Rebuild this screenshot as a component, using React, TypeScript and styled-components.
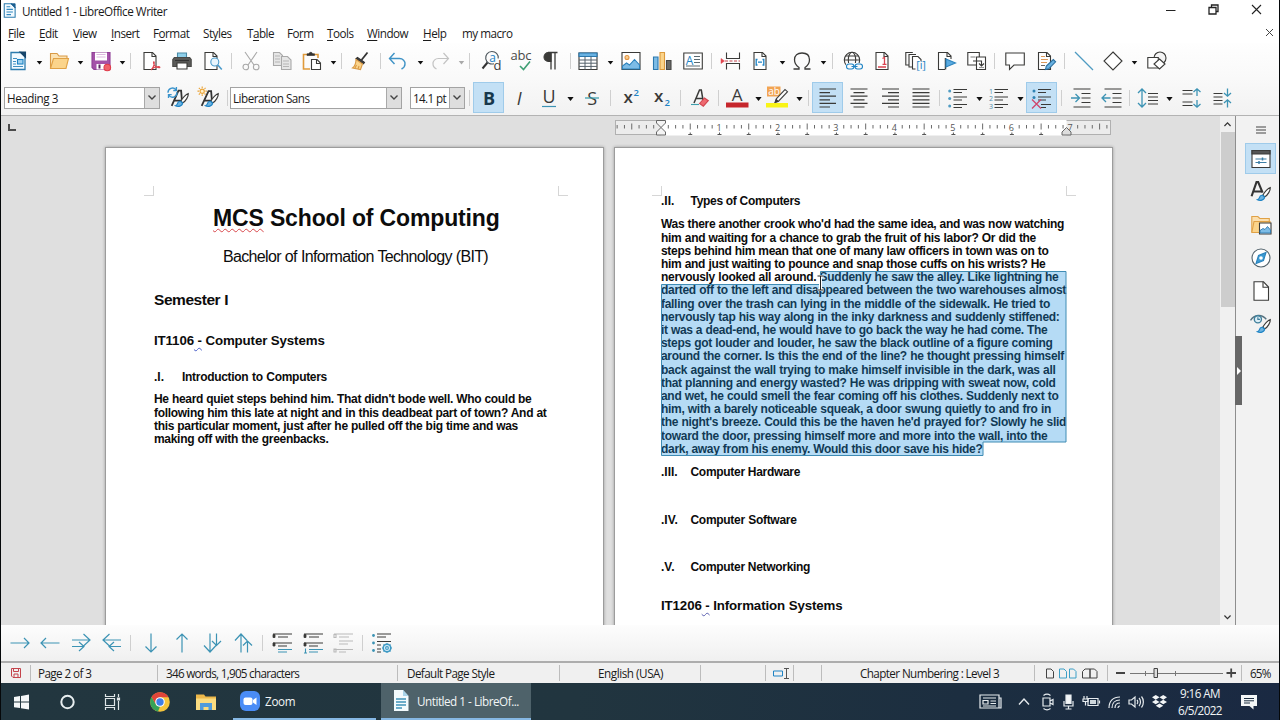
import React from 'react';
import styled, { createGlobalStyle, css } from 'styled-components';

const INK = '#3a3a38';
const BLUE = '#1e83c4';
const TEAL = '#3c93b4';
const GREY = '#b9b9b9';

const Global = createGlobalStyle`
  * { box-sizing: border-box; }
  body { margin: 0; background: #fff; overflow: hidden; }
`;

/* ---------- shell ---------- */
const Screen = styled.div`
  position: relative;
  width: 1280px;
  height: 720px;
  display: flex;
  flex-direction: column;
  overflow: hidden;
  background: #fff;
  color: #1a1a1a;
  font: 11.7px/16px 'Open Sans', 'Noto Sans', sans-serif;
  &::after {
    content: '';
    position: absolute;
    inset: 0;
    border: solid #05080a;
    border-width: 0 1px;
    pointer-events: none;
  }
`;
const Label = styled.span<{ $ls?: number; $ml?: number }>`
  white-space: nowrap;
  flex: none;
  letter-spacing: ${p => p.$ls ?? -0.6}px;
  margin-left: ${p => p.$ml ?? 0}px;
`;
const TitleBar = styled.header`
  height: 22px;
  flex: none;
  display: flex;
  align-items: center;
  padding: 0 18px 1px 2px;
  gap: 5px;
`;
const WindowButtons = styled.div`
  display: flex;
  margin-left: auto;
  align-items: center;
  gap: 32px;
  height: 18px;
  padding-bottom: 2px;
`;
const MenuBar = styled.nav`
  height: 21px;
  flex: none;
  display: flex;
  align-items: center;
  padding: 0 6px 0 8px;
`;
const MenuItem = styled.span<{ $w: number }>`
  width: ${p => p.$w}px;
  white-space: nowrap;
  letter-spacing: -0.5px;
  u { text-underline-offset: 1.5px; text-decoration-thickness: 1px; }
`;
const MenuClose = styled.div`
  display: flex;
  margin-left: auto;
`;
const Toolbar = styled.div<{ $h: number; $pl: number; $pt?: number; $bg: string; $line?: string }>`
  height: ${p => p.$h}px;
  flex: none;
  display: flex;
  align-items: center;
  padding-left: ${p => p.$pl}px;
  padding-top: ${p => p.$pt ?? 0}px;
  background: ${p => p.$bg};
  ${p => p.$line && css`border-bottom: ${p.$line};`}
`;
const Tool = styled.span<{ $ml: number; $w?: number; $on?: boolean }>`
  flex: none;
  display: flex;
  align-items: center;
  justify-content: center;
  margin-left: ${p => p.$ml}px;
  width: ${p => p.$w ?? 20}px;
  height: ${p => (p.$on ? 31 : 22)}px;
  ${p => p.$on && css`
    background: #c3e0f5;
    border: 1px solid #9fcbea;
  `}
`;
const Divider = styled.i<{ $ml: number }>`
  flex: none;
  width: 1px;
  height: 16px;
  margin-left: ${p => p.$ml}px;
  background: #cfcfcf;
`;
const Caret = styled.i<{ $ml: number; $off?: boolean }>`
  flex: none;
  width: 7px;
  height: 4px;
  margin: 3px 0 0 ${p => p.$ml}px;
  background: ${p => (p.$off ? '#a9a9a9' : '#111')};
  clip-path: polygon(5% 0, 95% 0, 50% 100%);
`;
const Combo = styled.div<{ $w: number; $ml: number }>`
  flex: none;
  display: flex;
  align-items: center;
  width: ${p => p.$w}px;
  height: 22px;
  margin-left: ${p => p.$ml}px;
  padding-left: 2px;
  border: 1px solid #a3a3a3;
  background: #fff;
`;
const ComboButton = styled.span`
  flex: none;
  display: flex;
  align-items: center;
  justify-content: center;
  margin-left: auto;
  width: 15px;
  height: 20px;
  background: #dedede;
  border-left: 1px solid #a9a9a9;
`;

/* ---------- workspace ---------- */
const Workspace = styled.div`
  height: 509px;
  flex: none;
  display: flex;
  overflow: hidden;
`;
const Canvas = styled.main`
  width: 1220px;
  flex: none;
  display: flex;
  flex-direction: column;
  background: #dfdfdf;
`;
const RulerRow = styled.div`
  height: 31px;
  flex: none;
  display: flex;
  align-items: flex-start;
  padding: 4px 0 0 8px;
`;
const TabSelector = styled.div`
  width: 607px;
  flex: none;
  padding-top: 4px;
  &::before {
    content: '';
    display: block;
    width: 6px;
    height: 5px;
    border: solid #4a4a4a;
    border-width: 0 0 2px 2px;
  }
`;
const Pages = styled.div`
  display: flex;
  gap: 10px;
  padding-left: 105px;
`;
const Page = styled.article<{ $pl: number }>`
  position: relative;
  width: 499px;
  height: 520px;
  padding-left: ${p => p.$pl}px;
  background: #fff;
  border: 1px solid #9c9c9c;
  box-shadow: 0 0 3px rgba(0, 0, 0, 0.3);
  color: #0c0c0c;
  font-family: 'Liberation Sans', Arial, sans-serif;
`;
const Corner = styled.i<{ $x: number; $side: 'l' | 'r' }>`
  position: absolute;
  top: 38px;
  left: ${p => p.$x}px;
  width: 10px;
  height: 10px;
  border: 0 solid #d6d6d6;
  border-bottom-width: 1px;
  ${p => (p.$side === 'l' ? css`border-right-width: 1px;` : css`border-left-width: 1px;`)}
`;
const Line = styled.div<{ $w: number; $lh: number; $mt?: number; $size: number; $ls?: number; $ml?: number; $plain?: boolean }>`
  margin: ${p => p.$mt ?? 0}px 0 0 ${p => p.$ml ?? 0}px;
  width: ${p => p.$w}px;
  font-size: ${p => p.$size}px;
  font-weight: ${p => (p.$plain ? 400 : 700)};
  line-height: ${p => p.$lh}px;
  letter-spacing: ${p => p.$ls ?? 0}px;
  white-space: nowrap;
  text-align-last: justify;
`;
const Body = styled.div<{ $mt: number }>`
  margin-top: ${p => p.$mt}px;
`;
const Numbered = styled.div<{ $mt: number; $tab: number; $w: number }>`
  display: flex;
  margin-top: ${p => p.$mt}px;
  font-size: 12px;
  font-weight: 700;
  line-height: 14px;
  letter-spacing: -0.3px;
  white-space: nowrap;
  b { width: ${p => p.$tab}px; letter-spacing: 0; }
  span { width: ${p => p.$w}px; text-align-last: justify; }
`;
const Spell = styled.span<{ $c: string }>`
  text-decoration: underline wavy ${p => p.$c} 0.8px;
  text-decoration-skip-ink: none;
  text-underline-offset: 2px;
`;
const Overlay = styled.svg<{ $x: number; $y: number }>`
  position: absolute;
  left: ${p => p.$x}px;
  top: ${p => p.$y}px;
`;
const ScrollTrack = styled.div`
  width: 15px;
  flex: none;
  display: flex;
  flex-direction: column;
  align-items: center;
  justify-content: space-between;
  background: #f0f0f0;
`;
const ScrollTop = styled.div`
  width: 100%;
  display: flex;
  flex-direction: column;
  align-items: center;
`;
const Thumb = styled.div`
  width: 14px;
  height: 175px;
  background: #cdcdcd;
`;
const ArrowBox = styled.div`
  height: 16px;
  display: flex;
  align-items: center;
`;
const Sidebar = styled.aside`
  position: relative;
  flex: 1;
  display: flex;
  flex-direction: column;
  align-items: center;
  padding: 3px 4px 0 9px;
  background: #f2f2f2;
  border-left: 1px solid #8e8e8e;
  gap: 2px;
`;
const SideItem = styled.div<{ $on?: boolean; $h?: number }>`
  flex: none;
  display: flex;
  align-items: center;
  justify-content: center;
  width: 31px;
  height: ${p => p.$h ?? 31}px;
  ${p => p.$on && css`
    background: #c3e0f5;
    border: 1px solid #9fcbea;
  `}
`;
const Splitter = styled.div`
  position: absolute;
  left: -1px;
  top: 220px;
  width: 7px;
  height: 69px;
  display: flex;
  align-items: center;
  justify-content: center;
  background: #666;
  &::after {
    content: '';
    border: solid transparent;
    border-width: 4px 0 4px 4px;
    border-left-color: #fff;
  }
`;

/* ---------- status bar and taskbar ---------- */
const StatusBar = styled.footer`
  height: 20px;
  flex: none;
  display: flex;
  align-items: center;
  background: #f0f0f0;
  padding-left: 11px;
`;
const StatusCell = styled.span<{ $w: number; $pl?: number; $ls?: number }>`
  flex: none;
  width: ${p => p.$w}px;
  padding-left: ${p => p.$pl ?? 0}px;
  letter-spacing: ${p => p.$ls ?? -0.6}px;
  height: 16px;
  white-space: nowrap;
  border-right: 1px solid #bcbcbc;
  display: flex;
  align-items: center;
`;
const Taskbar = styled.div`
  height: 37px;
  flex: none;
  display: flex;
  align-items: center;
  padding-left: 12px;
  background: linear-gradient(90deg, #22363f 0%, #21353f 45%, #1c2e40 75%, #1a2942 100%);
  color: #f2f5f6;
`;
const Task = styled.div<{ $w: number; $ml: number; $pl: number; $on?: boolean }>`
  flex: none;
  display: flex;
  align-items: center;
  margin-left: ${p => p.$ml}px;
  width: ${p => p.$w}px;
  height: 37px;
  padding-left: ${p => p.$pl}px;
  gap: 5px;
  border-bottom: 2px solid #86b8e4;
  background: ${p => (p.$on ? '#4e626a' : 'transparent')};
`;
const Clock = styled.div`
  width: 46px;
  flex: none;
  margin-left: 10px;
  text-align: center;
  line-height: 17px;
  letter-spacing: -0.6px;
`;

/* ---------- icons ---------- */
const sheet = 'M3 1.5h8.5L15 5v13.5H3z';
const fold = 'M11 1.5V5.5h4';
const L = (rows: [number, number, number][], c = INK, w = 1.2) => (
  <path d={rows.map(([x1, x2, y]) => `M${x1} ${y}H${x2}`).join('')} stroke={c} strokeWidth={w} />
);
const T = (x: number, y: number, s: string, size: number, fill = INK, weight = 400, style = 'normal') => (
  <text x={x} y={y} fontSize={size} fill={fill} stroke="none" fontWeight={weight} fontStyle={style} textAnchor="middle" letterSpacing="-0.2">{s}</text>
);
const brush = (
  <g>
    <path d="M19.3 6.2c-2 .6-5.6 4.2-7 7.2l1.8 1.7c2.8-1.7 5.5-6.1 5.2-8.9z" fill="#fff" stroke={INK} />
    <path d="M12 13.6c-1.7-.3-2.7.8-3 2.2-.2 1.2-1 1.7-2 2 2.5 1.3 6.8.6 6.9-2.6z" fill="#6db3e0" stroke={BLUE} />
  </g>
);
const listRows: [number, number, number][] = [[5.5, 19, 1.5], [5.5, 14, 4.5], [5.5, 19, 9], [5.5, 14, 12], [5.5, 19, 16.5], [5.5, 14, 19.5]];
const indentRows: [number, number, number][] = [[2.5, 19.5, 1], [10.5, 19.5, 5.5], [10.5, 19.5, 10], [10.5, 19.5, 14.5], [2.5, 19.5, 19]];
const ICONS: Record<string, React.ReactNode> = {
  newdoc: <><path d="M3 1.5h10l4 4v13H3z" fill="#f2faff" stroke="#2c7cae" strokeWidth="1.3" /><path d="M12 1h5.5v5.5z" fill="#17466b" stroke="#17466b" />{L([[5, 9, 7.5], [5, 8, 10.5], [5, 15, 15.5], [5, 8, 13]], '#3f8fc0', 1)}<rect x="9.5" y="8.5" width="5.5" height="4.5" fill="#9fd0ee" stroke={BLUE} /></>,
  appdoc: <><path d="M3 1h9.500l5 5v13H3z" fill="#f2faff" stroke="#2c7cae" strokeWidth="1.4" /><path d="M12 1h5.500v5.500z" fill="#1b5f90" stroke="#1b5f90" />{L([[6, 11, 5], [6, 14.5, 8.5], [6, 14.5, 12], [6, 12, 15.5]], '#2f86bd', 1.5)}</>,
  folder: <><path d="M1.5 17V2.5h6.5l2 2.5h8v3" fill="#fbe3b5" stroke="#d99a45" /><path d="M1.5 17.5L4.5 7.5h15l-2.5 10z" fill="#fbd48b" stroke="#e0a145" /></>,
  save: <><path d="M1 1.5h18v17H3l-2-2z" fill="#a452a8" stroke="#8f3f96" /><path d="M4 1.500h12V9.500H4z" fill="#fff" stroke="none" /><path d="M5.500 13h9v5.500h-9z" fill="#fff" stroke="none" /><path d="M8.500 13.500v4" stroke="#5a2460" strokeWidth="2" /><path d="M5.500 3.500h9M5.500 6h9" stroke="#ddb9df" /><circle cx="16.300" cy="16.500" r="3.300" fill="#f0616b" stroke="#e03c4a" /></>,
  pdf: <><path d={sheet} fill="#fff" /><path d={fold} /><path d="M10 19c1.5-1 3.5-5 3.3-7.5-.2-1.200-1-.8-.8.5.3 2 2.500 4.800 5.500 4.800 1.500 0 1-1.200-.5-1.200-2.500 0-5 .9-7 2.400" stroke="#dd4650" strokeWidth="1.100" /></>,
  print: <><path d="M5.5 7V2h9v5" fill="#8fd0ea" stroke="#4a8aa6" /><path d="M.8 8.5l1.5-2h15.400l1.500 2v7H.8z" fill="#5a5a58" stroke="#484846" /><path d="M5 12h10v6H5z" fill="#fff" /><path d="M3 9.5h14" stroke="#333" /></>,
  preview: <><path d={sheet} transform="translate(-1 0)" fill="#fff" /><path d={fold} transform="translate(-1 0)" /><circle cx="11.800" cy="11" r="4" fill="#e9f5fd" stroke="#4a9acb" /><path d="M14.800 14l4 4.500" stroke="#4a9acb" strokeWidth="1.600" /></>,
  cut: <g stroke="#a9a9a9"><path d="M4 1l9 13M16 1L7 14" /><circle cx="4.800" cy="16" r="2.800" /><circle cx="15.200" cy="16" r="2.800" /></g>,
  copy: <g stroke="#a9a9a9"><path d="M1.5 1.5h6l3 3v10h-9z" fill="#e6e6e6" /><path d="M9.5 5.500h6l3.500 3.500v9.500H9.500z" fill="#e6e6e6" />{L([[3, 8, 5], [3, 8, 8], [3, 8, 11], [11, 17, 10], [11, 17, 13], [11, 17, 15.5]], '#b5b5b5', 1)}</g>,
  paste: <><path d="M8 18H1.5V3.500H16V7" stroke="#e09a3a" strokeWidth="1.600" /><path d="M5 4.500V2.800h2c0-2 3.500-2 3.500 0h2v1.700z" fill="#333" stroke="#333" strokeWidth=".6" /><path d="M9.500 8.500h5.500l3.500 3.500v6.500h-9z" fill="#fff" /><path d="M14.500 8.500v4h4" /></>,
  broom: <><path d="M16.500 1.500L10.500 9" stroke="#333" strokeWidth="1.800" /><path d="M6.500 6.500l7 4.800-1 1.500-7.500-5z" fill="#444" stroke="#333" /><path d="M5 8.500l6.500 4.500-2 5.500-8-1.500c2-1.500 3.500-5 3.500-8.500z" fill="#fbd48b" stroke="#d99a45" /><path d="M4 17l1.500-3M7 18l1-3" stroke="#d99a45" /></>,
  undo: <path d="M1.500 7.500h10a5.500 5 0 015.500 5.500c0 2.500-1.500 4-3.500 5M6.500 2l-5 5.500L6.500 13" stroke="#3f93c6" strokeWidth="1.400" />,
  redo: <path d="M18.500 7.500h-10A5.500 5 0 003 13c0 2.500 1.500 4 3.500 5M13.500 2l5 5.500-5 5.500" stroke="#c3c3c3" strokeWidth="1.200" />,
  find: <><path d="M6.500 11.500L1.500 17.500" stroke="#333" strokeWidth="2" /><path d="M13 12.700A6.300 6.300 0 1117.200 7.500" stroke="#4c565c" />{T(11.500, 10.500, 'a', 12, BLUE)}{T(16.500, 19, 'd', 13, '#3a3a3a')}</>,
  abc: <>{T(10, 8.500, 'abc', 13, '#4a4a48')}<path d="M9 15l3.500 3.500L19 10.500" stroke="#3f9f74" strokeWidth="1.600" /></>,
  pilcrow: <><path d="M10 1.500H7.500a4.500 4.500 0 000 9H10z" fill={INK} /><path d="M10 1.500v17M14 1.500v17M7 1.500h9.500" strokeWidth="1.300" /></>,
  table: <><path d="M1 2h18v16.500H1z" fill="#fff" /><path d="M1 2h18v3.500H1z" fill="#69b2e2" stroke="#2a78ae" /><path d="M1 9h18M1 12.200h18M1 15.400h18M7 5.500v13M13 5.500v13" stroke="#55616a" strokeWidth="1" /></>,
  image: <><path d="M1 1.500h18v17H1z" fill="#fff" /><circle cx="6" cy="6.500" r="2" fill="#f9ce92" stroke="#e29542" /><path d="M1.500 18v-3l4-3 3 2 5-5.500 5 5.500v4z" fill="#7dbce6" stroke="#2c83bd" /></>,
  chart: <><path d="M1.500 6h4.500v12.500H1.500z" fill="#7dbce6" stroke="#2c78ae" /><path d="M8 1.500h4.500v17H8z" fill="#fbd48b" stroke="#dc9a3c" /><path d="M14.500 9.500H19v9h-4.500z" fill="#6a6a68" stroke="#484846" /></>,
  textbox: <><path d="M.8 2h18.500v16H.8z" fill="#fff" />{T(6.500, 13.500, 'A', 12, BLUE)}{L([[11, 17, 5.5], [11, 17, 8.5], [11, 17, 11.5], [3, 17, 15]], '#5a6a72', 1)}</>,
  pagebreak: <><path d="M5.500 1.500v6h13v-6M5.500 18.500v-6h13v6" /><path d="M4 10h15" stroke="#c3434c" strokeDasharray="3 1.500" /><path d="M0 7.500l3.500 2.500L0 12.500z" fill="#e0444f" stroke="#e0444f" strokeWidth=".5" /></>,
  field: <><path d={sheet} fill="#fff" /><path d={fold} /><path d="M6.500 8.500H5.200v5.500h1.300M11.500 8.500h1.300V14h-1.300M7 11.200h4" stroke={BLUE} strokeWidth="1.300" /></>,
  omega: <path d="M1.500 18h5.500v-1.500C4 14.500 2.500 12 2.500 8.800 2.500 4.500 5.500 2 10 2s7.500 2.500 7.500 6.800c0 3.200-1.500 5.700-4.500 7.700V18h5.500" strokeWidth="1.300" />,
  link: <><circle cx="9" cy="9" r="7.700" /><ellipse cx="9" cy="9" rx="3.700" ry="7.700" /><path d="M1.500 9h15M2.500 5h13" /><path d="M3 12h17v8H3z" fill="#fafafa" stroke="none" /><rect x="3.500" y="13" width="7.500" height="5" rx="2.500" stroke={BLUE} /><rect x="12" y="13" width="7.500" height="5" rx="2.500" stroke={BLUE} /><path d="M8.500 15.500h6" stroke={BLUE} /></>,
  footnote: <><path d={sheet} fill="#fff" /><path d={fold} /><path d="M9.500 7.500l2-1.200v7M9.500 13.300h4M5 16h8" stroke="#d9434f" strokeWidth="1.300" /></>,
  index: <><path d="M3.500 14H.8V1.500h7M7 16H4V3.500h7" /><path d="M7.500 5.500h5.500l3 3V18H7.500z" fill="#fff" /><path d="M10.500 10H21v10H10.500z" fill="#fafafa" stroke="none" />{T(16, 18, '[i]', 11, BLUE)}</>,
  bookmark: <><path d="M8 18.500H1.500v-17h9L14 5v3" fill="#fff" /><path d="M10 1.500V5.500h4" /><path d="M8.500 7v11.500" strokeWidth="1.500" /><path d="M9 8l9.500 4L9 16z" fill="#5aaae0" stroke="#2c83bd" /></>,
  crossref: <><path d="M9 14H.8V1.500h11.500V6" fill="#fff" /><path d="M3.500 6h5" stroke="#888" /><path d="M9.500 6h9v12.500h-9z" fill="#fff" /><path d="M6 10h8.500v4M12 12.500l2.500 2.500 2.500-2.500" /><path d="M12 16.500h5" stroke="#999" /></>,
  comment: <path d="M.8 2h18.500v12H9l-4.500 4.500V14H.8z" fill="#fff" />,
  track: <><path d={sheet} transform="translate(-.5 0)" fill="#fff" /><path d={fold} transform="translate(-.5 0)" />{L([[5, 9, 5.5], [5, 12, 8.5], [5, 11, 11.5]], '#dc9a5c', 1.2)}{L([[5, 9, 14.5]], '#666', 1)}<path d="M9.500 18.500l.8-3.500 7-6.500 2.300 2.300-6.800 7z" fill="#69b2e2" stroke="#2a6f9f" /></>,
  line: <path d="M1 1l18 18" stroke="#4f9bc2" strokeWidth="1.200" />,
  diamond: <path d="M10 1l9 9-9 9-9-9z" fill="#fff" />,
  shapes: <><circle cx="13" cy="7" r="6" fill="#f4f4f4" /><path d="M.8 6.500h10.500V17H.8z" fill="#fff" /><path d="M12.500 8l5.500 5-5.500 5-5.500-5z" fill="#fff" /></>,
  styleUpd: <><path d="M3.500 18L10 3.500h2.500L13.500 16M5.500 13h8" stroke="#333" strokeWidth="1.700" />{brush}<g stroke="#3b94cc" strokeWidth="1.300"><path d="M0 5.500A4.300 4.300 0 017.500 2.500M8 0v3.300H5M8.500 5A4.300 4.300 0 011 8.200M.5 10.500V7.300h3" /></g></>,
  styleNew: <><path d="M3.500 18L10 4h2.500L13.500 16M5.500 13h8" stroke="#333" strokeWidth="1.700" />{brush}<circle cx="4" cy="4" r="2" fill="#fff2cf" stroke="#eba53a" /><path d="M4-.5v1.500M4 7v1.500M-.5 4H1M7 4h1.500M.8.8l1 1M7.200.8l-1 1M.8 7.200l1-1M7.200 7.200l-1-1" stroke="#eba53a" /></>,
  bold: T(10, 16.500, 'B', 18, '#17384c', 700),
  italic: T(10, 16.500, 'I', 18, INK, 400, 'italic'),
  underline: <>{T(10, 14.500, 'U', 18)}<path d="M3 18.500h14" stroke="#3c93b4" strokeWidth="1.200" /></>,
  strike: <>{T(10, 16.500, 'S', 18)}<path d="M3 10h14" stroke="#3f9fae" strokeWidth="1.300" /></>,
  sup: <>{T(7, 14.500, 'x', 17, INK, 600)}{T(15, 8, '2', 9.500, BLUE, 600)}</>,
  sub: <>{T(6.500, 13.500, 'x', 17, INK, 600)}{T(15, 17.500, '2', 9.500, BLUE, 600)}</>,
  clear: <><path d="M4 15L9.500 2h1.800L13 12M6 10.500h6.500" strokeWidth="1.500" /><path d="M1 16.500h8" stroke="#3f9fae" /><path d="M9.500 15.500l5-5.500 3.800 2.700-5 5.500z" fill="#ee6a70" stroke="#d2444e" /></>,
  fontColor: <>{T(10, 12.500, 'A', 17)}<path d="M-1 14.500h22.500v5H-1z" fill="#c6262c" stroke="none" /></>,
  highlight: <><path d="M0-1.500h13.500v10H0z" fill="#f2a452" stroke="none" />{T(7, 6.500, 'ab', 10, '#fff')}<path d="M8.500 14l1-3.500L18 1.500l2.500 2.200-8.500 9z" fill="#fff" stroke="#444" /><path d="M8 14.500l1.200-3 2 2z" fill="#333" /><path d="M-1 15h22v4.500H-1z" fill="#f9f416" stroke="none" /></>,
  left: L([[1.5, 18, 1], [1.5, 12, 4.6], [1.5, 18, 8.2], [1.5, 12, 11.8], [1.5, 18, 15.4], [1.5, 12, 19]]),
  center: L([[1.5, 18.5, 1], [4.5, 15.5, 4.6], [1.5, 18.5, 8.2], [4.5, 15.5, 11.8], [1.5, 18.5, 15.4], [4.5, 15.5, 19]]),
  right: L([[1, 18, 1], [7, 18, 4.6], [1, 18, 8.2], [7, 18, 11.8], [1, 18, 15.4], [7, 18, 19]]),
  justify: L([[1.5, 18.5, 1], [1.5, 18.5, 4.6], [1.5, 18.5, 8.2], [1.5, 18.5, 11.8], [1.5, 18.5, 15.4], [1.5, 18.5, 19]]),
  bullets: <>{L(listRows)}<g fill="#4f9bc2" stroke="none"><circle cx="1.700" cy="3" r="1.500" /><circle cx="1.700" cy="10.500" r="1.500" /><circle cx="1.700" cy="18" r="1.500" /></g></>,
  numbers: <>{L(listRows)}{T(2, 5.500, '1', 7, '#4f8fae')}{T(2, 13, '2', 7, '#4f8fae')}{T(2, 20.500, '3', 7, '#4f8fae')}</>,
  nolist: <>{L([[6, 19, 1.5], [6, 14, 4.5], [6, 19, 9], [6, 14, 12], [9, 19, 16.5], [9, 14, 19.5]])}<g fill="#2f83b4" stroke="none"><circle cx="2" cy="3" r="1.500" /><circle cx="2" cy="9.500" r="1.500" /></g><path d="M0 11.500l9 9M9 11.500l-9 9" stroke="#d0466c" strokeWidth="1.300" /></>,
  indentMore: <>{L(indentRows)}<path d="M0 10h7.500M4.500 6l4 4-4 4" stroke={TEAL} strokeWidth="1.300" /></>,
  indentLess: <>{L(indentRows)}<path d="M1 10h7.500M4 6l-4 4 4 4" stroke={TEAL} strokeWidth="1.300" /></>,
  lineSpace: <>{L([[10, 20, 5.5], [10, 20, 9], [10, 20, 12.5], [10, 20, 16]])}<path d="M4 1v18M0 5l4-4 4 4M0 15l4 4 4-4" stroke={TEAL} strokeWidth="1.300" /></>,
  paraMore: <>{L([[0.5, 10.5, 2.5], [0.5, 10.5, 6], [0.5, 10.5, 14], [0.5, 10.5, 17.5]])}<path d="M15 8V.8M11.500 4L15 .8 18.500 4M15 12v7M11.500 16l3.500 3.200 3.500-3.200" stroke={TEAL} strokeWidth="1.300" /></>,
  paraLess: <>{L([[0.5, 9.5, 5.5], [0.5, 9.5, 9], [0.5, 9.5, 12.5], [0.5, 9.5, 16]])}<path d="M14.500.5V8M11 5l3.500 3.200L18 5M14.500 19.500V12M11 15l3.500-3.200L18 15" stroke={TEAL} strokeWidth="1.300" /></>,
  goRight: <path d="M.5 10H19M14 5l5 5-5 5" stroke={TEAL} strokeWidth="1.200" />,
  goLeft: <path d="M1 10h18.500M6 5l-5 5 5 5" stroke={TEAL} strokeWidth="1.200" />,
  goRight2: <path d="M1 7h18M12.500 1L19 7 12.500 13M1 13.500h11.500M8 9l5 4.500L8 18" stroke={TEAL} strokeWidth="1.200" />,
  goLeft2: <path d="M1 7h18M7.500 1L1 7l6.500 6M7.500 13.500H19M12 9l-5 4.500 5 4.500" stroke={TEAL} strokeWidth="1.200" />,
  goDown: <path d="M10 .5V19M4.500 13.500L10 19l5.500-5.500" stroke={TEAL} strokeWidth="1.200" />,
  goUp: <path d="M10 19.500V1M4.500 6.500L10 1l5.500 5.500" stroke={TEAL} strokeWidth="1.200" />,
  goDown2: <path d="M7 .5V19M1 12.500L7 19l6-6.500M13.500.5v12M9 8l4.500 4.500L18 8" stroke={TEAL} strokeWidth="1.200" />,
  goUp2: <path d="M7 19.500V1M1 7.500L7 1l6 6.500M13.500 19.500V8M9 12.500L13.500 8l4.500 4.500" stroke={TEAL} strokeWidth="1.200" />,
  outline1: <>{L([[1, 20, 1], [6, 16, 4], [1, 20, 10], [6, 15, 13]])}{L([[6, 20, 16.5], [6, 15, 19]], TEAL)}<path d="M1 1.500h2v3H1zM1 10h2v3H1z" fill={INK} strokeWidth=".8" /></>,
  outline2: <>{L([[1, 20, 1], [6, 16, 4], [1, 20, 10], [6, 15, 13]])}{L([[6, 20, 16.5], [6, 15, 19]], TEAL)}<path d="M1 1.500h2v3H1zM1 10h2v3H1z" fill={INK} strokeWidth=".8" /><path d="M2.500 15.500V20M1 20h3" stroke={TEAL} /></>,
  outline3: <>{L([[1, 20, 1], [6, 16, 4], [6, 20, 8], [6, 15, 11], [1, 20, 16.5], [6, 13, 19]], GREY)}<path d="M1 1.500h2v3H1zM1 16h2v3H1z" stroke={GREY} /></>,
  outlineCfg: <>{L([[5, 19, 1], [5, 14, 4], [5, 19, 8.5], [5, 9, 12], [5, 9, 16], [5, 9, 19]])}<g fill={TEAL} stroke="none"><circle cx="1.500" cy="2.500" r="1.400" /><circle cx="1.500" cy="10" r="1.400" /><circle cx="1.500" cy="17.500" r="1.400" /></g><circle cx="15" cy="15" r="3.800" fill="#d4ecf8" stroke="#3f9ac4" strokeWidth="1.500" /><circle cx="15" cy="15" r="1.400" stroke="#3f9ac4" /><path d="M15 10v1.500M15 18.500V20M10 15h1.500M18.500 15H20M11.500 11.500l1 1M17.500 17.500l1 1M18.500 11.500l-1 1M12.500 17.500l-1 1" stroke="#3f9ac4" /></>,
  props: <><path d="M1 1.500h18v17H1z" fill="#fff" /><path d="M1 1.500h18V5H1z" fill="#555" /><path d="M4.500 10h11M4.500 13.500h11" stroke="#3d7fa6" /><path d="M11.500 8.500v3M8 12v3" stroke="#3d7fa6" strokeWidth="1.500" /></>,
  styles: <><path d="M1.500 14.500L6.200 1h1.600L12 11M3.200 10h8" stroke="#333" strokeWidth="2" />{brush}</>,
  gallery: <><path d="M.8 17V1.500h6l2 2h9.500v3" fill="#fbdfae" stroke="#e0a145" /><path d="M.8 17.500L3 6.500h16v8l-3 3z" fill="#fbd48b" stroke="#e0a145" /><path d="M8.500 8h11.500v11H8.500z" fill="#fff" /><path d="M9 18v-2.500l3-2 2 1 2.500-3 3 3.500v3z" fill="#7dbce6" stroke="#2c78ae" strokeWidth=".9" /></>,
  compass: <><circle cx="10" cy="10" r="9" fill="#fff" stroke="#53636c" /><path d="M15 4.500l-2.500 8L5 15.500l2.500-8z" fill="#3b9bd4" stroke="#2c83bd" /><circle cx="10" cy="10" r="1.800" fill="#fff" stroke="none" /></>,
  page: <><path d="M3 .8h9.500L17.500 6v13.200H3z" fill="#fff" /><path d="M12 .8V6.300h5.500" /></>,
  inspector: <><path d="M.5 7C4 1.500 11 .5 15.500 6" stroke="#55727f" strokeWidth="1.300" /><circle cx="7.500" cy="6" r="3.400" stroke="#3f7f9c" fill="#dceef6" strokeWidth="1.300" /><path d="M7.500 4v2h2" stroke="#3f7f9c" />{brush}</>,
};
const Glyph = styled.svg`
  display: block;
  flex: none;
  overflow: visible;
  font-family: 'Open Sans', 'Noto Sans', sans-serif;
`;
const TaskGlyph = styled(Glyph)<{ $ml: number }>`
  margin-left: ${p => p.$ml}px;
`;
const Icon = ({ n, s = 20 }: { n: string; s?: number }) => (
  <Glyph width={s} height={s} viewBox="0 0 20 20" fill="none" stroke={INK} strokeWidth="1.1">{ICONS[n]}</Glyph>
);
const Chevron = ({ up, c = '#444', w = 8 }: { up?: boolean; c?: string; w?: number }) => (
  <Glyph width={w} height={w / 2 + 1} viewBox="0 0 8 5" fill="none" stroke={c} strokeWidth="1.4">
    <path d={up ? 'M.5 4.500L4 1l3.500 3.500' : 'M.5.5L4 4 7.500.5'} />
  </Glyph>
);

/* Toolbar contents: [kind, gap before]; "-" is a divider, "v" a drop-down arrow, "x" a disabled one. */
type Item = [string, number, number?, boolean?];
const STANDARD: Item[] = [
  ['newdoc', 0], ['v', 8], ['folder', 6], ['v', 8], ['save', 7], ['v', 8], ['-', 4], ['pdf', 10], ['print', 11], ['preview', 11],
  ['-', 8], ['cut', 9], ['copy', 11], ['paste', 10], ['v', 8], ['-', 4], ['broom', 9], ['-', 9], ['undo', 7], ['v', 9], ['redo', 6],
  ['x', 8], ['-', 4], ['find', 11], ['abc', 10], ['pilcrow', 10], ['-', 9], ['table', 7], ['v', 9], ['image', 7], ['chart', 11],
  ['textbox', 11], ['-', 8], ['pagebreak', 9], ['field', 10], ['v', 8], ['omega', 6], ['v', 8], ['-', 5], ['link', 10],
  ['footnote', 10], ['index', 12], ['bookmark', 12], ['crossref', 10], ['-', 7], ['comment', 10], ['track', 11], ['-', 8],
  ['line', 9], ['diamond', 9], ['v', 8], ['shapes', 9],
];
const FORMAT: Item[] = [
  ['-', 4], ['bold', 3, 31, true], ['italic', 5], ['underline', 10], ['v', 8], ['strike', 8], ['-', 8], ['sup', 10], ['sub', 11],
  ['-', 8], ['clear', 9], ['-', 8], ['fontColor', 6, 24], ['v', 6], ['highlight', 3, 24], ['v', 7], ['-', 5],
  ['left', 3, 31, true], ['center', 6], ['right', 12], ['justify', 10], ['-', 8], ['bullets', 8], ['v', 8], ['numbers', 6],
  ['v', 8], ['nolist', 2, 31, true], ['-', 4], ['indentMore', 9], ['indentLess', 11], ['-', 7], ['lineSpace', 8], ['v', 8],
  ['paraMore', 9], ['paraLess', 11],
];
const OUTLINE: Item[] = [
  ['goRight', 0], ['goLeft', 10], ['goRight2', 11], ['goLeft2', 11], ['-', 8], ['goDown', 10], ['goUp', 11], ['goDown2', 11],
  ['goUp2', 11], ['-', 8], ['outline1', 9], ['outline2', 11], ['outline3', 10], ['-', 9], ['outlineCfg', 9],
];
const Items = ({ list, size = 20 }: { list: Item[]; size?: number }) => (
  <>
    {list.map(([n, ml, w, on], i) =>
      n === '-' ? <Divider key={i} $ml={ml} /> :
      n === 'v' || n === 'x' ? <Caret key={i} $ml={ml} $off={n === 'x'} /> :
      <Tool key={i} $ml={ml} $w={w} $on={on}><Icon n={n} s={size} /></Tool>
    )}
  </>
);

const MENU: [string, number, string][] = [
  ['', 31, 'F|ile'], ['', 34, 'E|dit'], ['', 38, 'V|iew'], ['', 42, 'I|nsert'], ['F', 50, 'o|rmat'], ['St', 44, 'y|les'],
  ['T', 40, 'a|ble'], ['Fo', 40, 'r|m'], ['', 40, 'T|ools'], ['', 56, 'W|indow'], ['', 39, 'H|elp'],
];

const PARA1: [string, number][] = [
  ["He heard quiet steps behind him. That didn't bode well. Who could be", 377.5],
  ['following him this late at night and in this deadbeat part of town? And at', 392.5],
  ['this particular moment, just after he pulled off the big time and was', 364],
  ['making off with the greenbacks.', 174.5],
];
const PARA2: [string, number][] = [
  ["Was there another crook who'd had the same idea, and was now watching", 403],
  ['him and waiting for a chance to grab the fruit of his labor? Or did the', 375],
  ['steps behind him mean that one of many law officers in town was on to', 387.5],
  ['him and just waiting to pounce and snap those cuffs on his wrists? He', 384.5],
  ['nervously looked all around. Suddenly he saw the alley. Like lightning he', 397.5],
  ['darted off to the left and disappeared between the two warehouses almost', 405],
  ['falling over the trash can lying in the middle of the sidewalk. He tried to', 389],
  ['nervously tap his way along in the inky darkness and suddenly stiffened:', 398.5],
  ['it was a dead-end, he would have to go back the way he had come. The', 386.5],
  ['steps got louder and louder, he saw the black outline of a figure coming', 391.5],
  ['around the corner. Is this the end of the line? he thought pressing himself', 403],
  ['back against the wall trying to make himself invisible in the dark, was all', 394.5],
  ['that planning and energy wasted? He was dripping with sweat now, cold', 394.5],
  ['and wet, he could smell the fear coming off his clothes. Suddenly next to', 397.5],
  ['him, with a barely noticeable squeak, a door swung quietly to and fro in', 390],
  ["the night's breeze. Could this be the haven he'd prayed for? Slowly he slid", 405],
  ['toward the door, pressing himself more and more into the wall, into the', 386.5],
  ['dark, away from his enemy. Would this door save his hide?', 321.5],
];
const Paragraph = ({ lines, mt }: { lines: [string, number][]; mt: number }) => (
  <Body $mt={mt}>
    {lines.map(([t, w], i) => <Line key={i} $size={12} $ls={-0.3} $lh={13.2} $w={w}>{t}</Line>)}
  </Body>
);

const Ruler = () => {
  const ticks: React.ReactNode[] = [];
  for (let i = -6; i <= 61; i++) {
    const x = 46 + i * 7.31;
    if (i === 0 || i === 56 || x > 494) continue;
    if (i % 8 === 0) ticks.push(<text key={i} x={x - 0.5} y={10.5} fontSize="9" fill="#555" textAnchor="middle">{i / 8}</text>);
    else ticks.push(<path key={i} d={`M${x} ${i % 4 === 0 ? 3.5 : 5}V${i % 4 === 0 ? 9.5 : 8.5}`} stroke="#6a6a6a" />);
    if (i > 0 && i < 56 && i % 4 === 0) ticks.push(<path key={`t${i}`} d={`M${x - 2} 14.500h4M${x} 12.500v2`} stroke="#555" />);
  }
  return (
    <Glyph width="497" height="17" viewBox="0 0 497 17" fill="none">
      <rect x=".5" y=".5" width="495" height="14" fill="#ececec" stroke="#b0b0b0" />
      <rect x="46" y="0" width="405.5" height="15.5" fill="#fff" />
      {ticks}
      <text x="455" y="10.5" fontSize="9" fill="#555" textAnchor="middle">7</text>
      <path d="M41.500.5h9v2.500L46 7.500 41.500 3zM41.500 15v-3L46 7.500l4.500 4.500v3z" fill="#f4f4f4" stroke="#666" />
      <path d="M447 15v-3l4.500-4.500L456 12v3z" fill="#ddd" stroke="#666" />
    </Glyph>
  );
};

export default function App() {
  return (
    <Screen>
      <Global />
      <TitleBar>
        <Icon n="appdoc" s={15} />
        <Label $ls={-0.48}>Untitled 1 - LibreOffice Writer</Label>
        <WindowButtons>
          <Glyph width="10" height="10" stroke="#222"><path d="M0 5.500h9.500" /></Glyph>
          <Glyph width="11" height="11" fill="none" stroke="#222" strokeWidth="1.3"><path d="M1 3.500h7v6.500H1zM3.500 3.500V1H10v6.500H8" /></Glyph>
          <Glyph width="11" height="11" stroke="#222" strokeWidth="1.1"><path d="M1 1l9 9M10 1l-9 9" /></Glyph>
        </WindowButtons>
      </TitleBar>
      <MenuBar>
        {MENU.map(([pre, w, rest], i) => {
          const [u, tail] = rest.split('|');
          return <MenuItem key={i} $w={w}>{pre}<u>{u}</u>{tail}</MenuItem>;
        })}
        <MenuItem $w={60}>my macro</MenuItem>
        <MenuClose><Glyph width="9" height="9" stroke="#444"><path d="M1 1l7 7M8 1L1 8" /></Glyph></MenuClose>
      </MenuBar>
      <Toolbar $h={36} $pl={8} $bg="linear-gradient(#fefefe, #f9f9f9)"><Items list={STANDARD} /></Toolbar>
      <Toolbar $h={37} $pl={4} $pt={1} $bg="linear-gradient(#f9f9f9, #f2f2f2)" $line="1px solid #b3b3b3">
        <Combo $w={156} $ml={0}><Label $ls={-0.45}>Heading 3</Label><ComboButton><Chevron /></ComboButton></Combo>
        <Tool $ml={7} $w={22}><Icon n="styleUpd" s={21} /></Tool>
        <Tool $ml={8} $w={22}><Icon n="styleNew" s={21} /></Tool>
        <Divider $ml={8} />
        <Combo $w={172} $ml={2}><Label $ls={-0.5}>Liberation Sans</Label><ComboButton><Chevron /></ComboButton></Combo>
        <Combo $w={55} $ml={8}><Label $ls={-0.65}>14.1 pt</Label><ComboButton><Chevron /></ComboButton></Combo>
        <Items list={FORMAT} />
      </Toolbar>

      <Workspace>
        <Canvas>
          <RulerRow>
            <TabSelector />
            <Ruler />
          </RulerRow>
          <Pages>
            <Page $pl={48}>
              <Corner $x={38} $side="l" /><Corner $x={452} $side="r" />
              <Line $size={23} $ls={-0.15} $lh={26} $mt={57} $ml={59} $w={285}><Spell $c="#d8474b">MCS</Spell> School of Computing</Line>
              <Line $size={16} $ls={-0.66} $lh={18} $mt={17} $ml={69} $w={265} $plain>Bachelor of Information Technology (BIT)</Line>
              <Line $size={15.5} $ls={-0.45} $lh={18} $mt={25} $w={74}>Semester I</Line>
              <Line $size={13.3} $ls={-0.12} $lh={16} $mt={24} $w={170}>IT1106<Spell $c="#4a5fc8"> -</Spell> Computer Systems</Line>
              <Numbered $mt={20.5} $tab={28} $w={145}><b>.I.</b><span>Introduction to Computers</span></Numbered>
              <Paragraph lines={PARA1} mt={9.9} />
            </Page>
            <Page $pl={46}>
              <Corner $x={37} $side="l" /><Corner $x={451} $side="r" />
              <Numbered $mt={46} $tab={29.5} $w={109.5}><b>.II.</b><span>Types of Computers</span></Numbered>
              <Paragraph lines={PARA2} mt={10.3} />
              <Numbered $mt={9.4} $tab={29.5} $w={109.5}><b>.III.</b><span>Computer Hardware</span></Numbered>
              <Numbered $mt={33.7} $tab={29.5} $w={106}><b>.IV.</b><span>Computer Software</span></Numbered>
              <Numbered $mt={33} $tab={29.5} $w={119.5}><b>.V.</b><span>Computer Networking</span></Numbered>
              <Line $size={13.3} $ls={-0.12} $lh={16} $mt={24} $w={181.5}>IT1206<Spell $c="#5a5fb0"> -</Spell> Information Systems</Line>
              <Overlay $x={46} $y={123} width="406" height="186">
                <path d="M159.500.5h245.500v170.500H322v13.500H.5V13.500h159z" fill="rgba(31,146,225,.33)" stroke="#3f8cb4" />
              </Overlay>
              <Overlay $x={201} $y={127} width="9" height="16" fill="none">
                <path d="M1.500 1h6M4.500 1v14M1.500 15h6" stroke="#fff" strokeWidth="3" />
                <path d="M1.500 1h6M4.500 1v14M1.500 15h6" stroke="#222" />
              </Overlay>
            </Page>
          </Pages>
        </Canvas>
        <ScrollTrack>
          <ScrollTop>
            <ArrowBox><Chevron up c="#333" w={7} /></ArrowBox>
            <Thumb />
          </ScrollTop>
          <ArrowBox><Chevron c="#333" w={7} /></ArrowBox>
        </ScrollTrack>
        <Sidebar>
          <SideItem $h={22}><Glyph width="10" height="8" stroke="#444" strokeWidth="1.2"><path d="M0 1h10M0 4h10M0 7h10" /></Glyph></SideItem>
          <SideItem $on><Icon n="props" /></SideItem>
          <SideItem><Icon n="styles" s={21} /></SideItem>
          <SideItem><Icon n="gallery" /></SideItem>
          <SideItem><Icon n="compass" /></SideItem>
          <SideItem><Icon n="page" /></SideItem>
          <SideItem><Icon n="inspector" s={21} /></SideItem>
          <Splitter />
        </Sidebar>
      </Workspace>

      <Toolbar $h={38} $pl={10} $bg="linear-gradient(#fdfdfd, #f0f0f0)" $line="2px solid #adadad"><Items list={OUTLINE} size={20} /></Toolbar>
      <StatusBar>
        <StatusCell $w={20}>
          <Glyph width="10" height="10" fill="none" stroke="#c4434b"><path d="M.5.5h9v9H2L.5 8zM2.500.5v3h5v-3M3 9.500V6h4v3.500" /></Glyph>
        </StatusCell>
        <StatusCell $w={127} $pl={7}>Page 2 of 3</StatusCell>
        <StatusCell $w={240} $pl={8} $ls={-0.73}>346 words, 1,905 characters</StatusCell>
        <StatusCell $w={162} $pl={9}>Default Page Style</StatusCell>
        <StatusCell $w={141} $pl={38} $ls={-0.45}>English (USA)</StatusCell>
        <StatusCell $w={65} />
        <StatusCell $w={28} $pl={7}>
          <Glyph width="17" height="11" fill="none" stroke={BLUE}><path d="M.5 3h9v5h-9z" /><path d="M11 .5h5M13.500.5v10M11 10.500h5" stroke="#555" /></Glyph>
        </StatusCell>
        <StatusCell $w={28} />
        <StatusCell $w={213} $pl={38}>Chapter Numbering : Level 3</StatusCell>
        <StatusCell $w={73} $pl={11}>
          <Glyph width="52" height="11" fill="none" stroke="#444">
            <path d="M.5 1h4.500l2.500 2.500V10h-7z" />
            <path d="M13.500 1h4.500l2.500 2.500V10h-7zM23.500 1h4l2.500 2.500V10h-6.500z" stroke="#3c9fc6" />
            <path d="M44 10h-7.500V3.500L39 1h5zM44 10h7V3.500L48.500 1H44z" />
          </Glyph>
        </StatusCell>
        <StatusCell $w={134} $pl={8}>
          <Glyph width="118" height="12" fill="none" stroke="#444">
            <path d="M0 6h9M110.500 6h9.500M115.200 1.500v9" strokeWidth="1.8" />
            <path d="M14 6.500h93M29.500 4v5M59.500 4v5" stroke="#777" />
            <path d="M38 1.500h3.500v9H38z" fill="#ddd" />
          </Glyph>
        </StatusCell>
        <Label $ml={8} $ls={-0.85}>65%</Label>
      </StatusBar>

      <Taskbar>
        <Glyph width="17" height="16" fill="#f4f7f8"><path d="M2 3l6-1v5.600H2zM9 1.900L17 .5v7.100H9zM2 8.500h6V14l-6-.8zM9 8.500h8v7l-8-1.200z" /></Glyph>
        <TaskGlyph $ml={30} width="16" height="16" fill="none" stroke="#e8eef0" strokeWidth="2"><circle cx="8.500" cy="8" r="6.200" /></TaskGlyph>
        <TaskGlyph $ml={29} width="17" height="16" fill="none" stroke="#dfe6e8" strokeWidth="1.2"><path d="M1.500 4.500h9v7h-9zM1.500 0v2.500h9V0M1.500 16v-2.500h9V16M14.500 0v3M14.500 7v9" /><path d="M13.500 4h2v2h-2z" fill="#dfe6e8" /></TaskGlyph>
        <TaskGlyph $ml={29} width="20" height="20" viewBox="0 0 20 20">
          <circle cx="10" cy="10" r="9.800" fill="#f5c53c" />
          <path d="M1.500 5A9.800 9.800 0 0118.500 5.200H10L5.800 12.500z" fill="#e0453a" />
          <path d="M1.500 5L5.900 12.400 10 14.500l-2 5A9.800 9.800 0 011.500 5z" fill="#36a257" />
          <circle cx="10" cy="10" r="4.800" fill="#fff" /><circle cx="10" cy="10" r="3.700" fill="#3d7fe8" />
        </TaskGlyph>
        <TaskGlyph $ml={26} width="20" height="18" viewBox="0 0 20 18">
          <path d="M0 1.500h8L9.500 3.500H20V17H0z" fill="#edb84a" /><path d="M0 5.500h20V17H0z" fill="#fbdc80" />
          <path d="M4 10h12v7h-3.500v-3h-5v3H4z" fill="#4f9bdc" />
        </TaskGlyph>
        <Task $w={143} $ml={17} $pl={7}>
          <Glyph width="20" height="20" viewBox="0 0 20 20"><rect width="20" height="20" rx="6" fill="#4a8cf6" /><rect x="3.500" y="6.500" width="9" height="7.500" rx="2" fill="#fff" /><path d="M13 9l3.500-2.500v7.500L13 11.500z" fill="#fff" /></Glyph>
          <Label $ls={-0.3}>Zoom</Label>
        </Task>
        <Task $w={150} $ml={5} $pl={12} $on>
          <Glyph width="16" height="21" viewBox="0 0 16 21"><path d="M1 0h9l5.500 6v15H1z" fill="#f2fafd" /><path d="M10 0l5.500 6H10z" fill="#a8d4ea" /><path d="M3 9h10M3 12h10M3 15h10M3 18h6" stroke="#3f93b8" strokeWidth="1.3" /></Glyph>
          <Label $ml={3} $ls={-0.48}>Untitled 1 - LibreOf...</Label>
        </Task>
        <TaskGlyph $ml={448} width="166" height="18" fill="none" stroke="#e6ebee" strokeWidth="1.2">
          <path d="M1 2h19v13H1zM20 5h2v10h-3" /><path d="M4 5h13M11.500 8H17M11.500 10.500H17M4 13h13" /><path d="M4 7.500h5v3.500H4z" />
          <path d="M40 11.500L45 6l5 5.500" strokeWidth="1.4" />
          <path d="M64 5h7v8h-7zM71 8l3-1.500v5L71 10M64.500 2.500c2-1.500 5-1.500 7 0M64.500 15.500c2 1.500 5 1.500 7 0" />
          <path d="M87 2h5v8.500h-5z" fill="#f2f5f6" /><path d="M85 8v5h9V8M89.500 13v3M86.500 16h6" />
          <path d="M109 5.500h10v7h-10zM120.500 7.500v3" /><path d="M111 7h6v4h-6z" fill="#cdd6dc" stroke="none" /><path d="M105 3v3M108 3v3M104 6h5v2.500h-5zM106.500 8.500v4" />
          <path d="M130 15C130 8 134 4 141 4M133 15c0-5 3-8 8-8M136 15c0-3 2-5 5-5M139 15c0-1.200.8-2 2-2" />
          <path d="M150 7h2.500L156 4v10l-3.500-3H150zM158 7c1 1 1 3 0 4M160 5c2 2 2 6 0 8M162.500 3.500c2.500 3 2.500 8 0 11" />
        </TaskGlyph>
        <TaskGlyph $ml={7} width="15" height="15" viewBox="0 0 16 15" fill="#f2f5f6"><path d="M4 .5L8 3 4 5.500 0 3zM12 .5L16 3l-4 2.500L8 3zM4 5.500L8 8l-4 2.500L0 8zM12 5.500L16 8l-4 2.500L8 8zM8 9.500l4 2.500-4 2.500L4 12z" /></TaskGlyph>
        <Clock>9:16 AM<br />6/5/2022</Clock>
        <TaskGlyph $ml={18} width="16" height="16"><path d="M0 1h16v11h-3.500v3.500L8.500 12H0z" fill="#f4f7f8" /><path d="M3 4.500h10M3 6.800h10M3 9h6" stroke="#1c2e40" /></TaskGlyph>
      </Taskbar>
    </Screen>
  );
}
